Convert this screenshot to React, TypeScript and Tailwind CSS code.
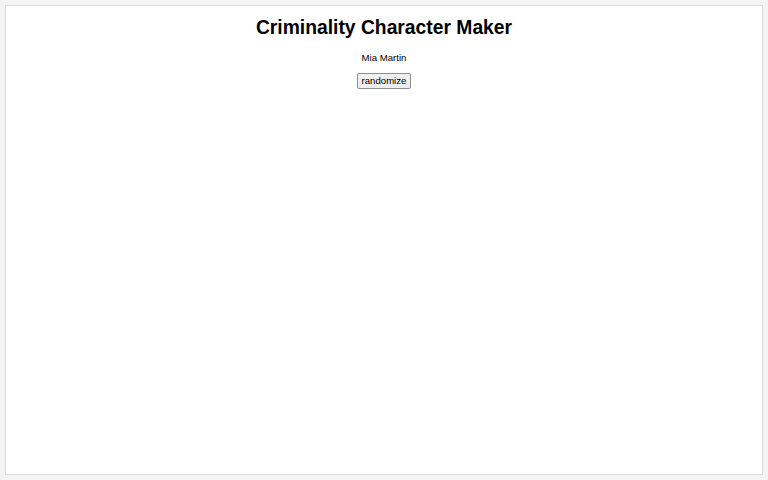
import React, { useState } from 'react';

const names = ['Mia Martin', 'Leo Carter', 'Ava Brooks', 'Noah Reyes', 'Ivy Holt'];

const App: React.FC = () => {
  const [name, setName] = useState<string>(names[0]);

  const randomize = () => {
    setName(names[Math.floor(Math.random() * names.length)]);
  };

  return (
    <div className="h-[480px] w-full bg-[#f4f4f4] p-[5px] font-['Liberation_Sans',Arial,sans-serif]">
      <div className="flex h-full w-full flex-col items-center border border-[#dcdcdc] bg-white text-black">
        <h1 className="mt-[10px] text-[19.3px] font-bold leading-[24px]">Criminality Character Maker</h1>
        <p className="mt-[12px] text-[9.6px] leading-[12px]">{name}</p>
        <button
          className="mt-[9px] rounded-[2px] border border-[#8f8f8f] bg-[#efefef] px-[4px] py-[1px] text-[9.6px] leading-[12px]"
          onClick={randomize}
        >
          randomize
        </button>
      </div>
    </div>
  );
};

export default App;
